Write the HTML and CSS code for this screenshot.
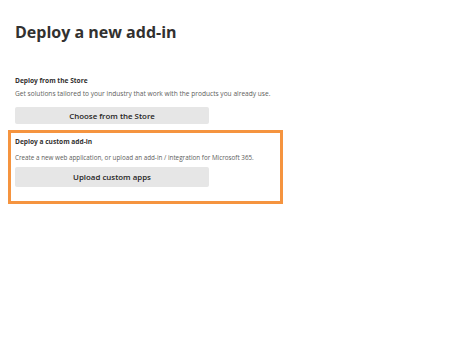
FILE: index.html
```html
<!DOCTYPE html>
<html lang="en">
<head>
    <meta charset="UTF-8">
    <meta name="viewport" content="width=device-width, initial-scale=1.0">
    <title>Deploy a new add-in</title>
    <link rel="stylesheet" href="styles.css">
</head>
<body>
    <div class="page">
        <h1>Deploy a new add-in</h1>

        <div class="section store">
            <h2>Deploy from the Store</h2>
            <p>Get solutions tailored to your industry that work with the products you already use.</p>
            <button class="action">Choose from the Store</button>
        </div>

        <div class="section highlight">
            <h2>Deploy a custom add-in</h2>
            <p>Create a new web application, or upload an add-in / integration for Microsoft 365.</p>
            <button class="action">Upload custom apps</button>
        </div>
    </div>
</body>
</html>
```

FILE: styles.css
```css
body {
    margin: 0;
    font-family: "Open Sans", Arial, sans-serif;
    color: #323130;
    background: #fff;
}

.page {
    padding: 20px 0 0 8px;
    width: 275px;
}

.page h1 {
    font-size: 16px;
    font-weight: 700;
    margin: 0 0 32px 7px;
    line-height: 24px;
}

.section {
    padding: 0 7px;
}

.section h2 {
    font-size: 6.6px;
    font-weight: 700;
    margin: 0;
    line-height: 10px;
}

.section p {
    font-size: 6.6px;
    color: #605e5c;
    margin: 3px 0 8px;
    line-height: 10px;
    white-space: nowrap;
}

.action {
    display: block;
    width: 194px;
    height: 17px;
    border: none;
    border-radius: 2px;
    background: #e6e6e6;
    font-family: "Open Sans", Arial, sans-serif;
    font-size: 7.9px;
    font-weight: 600;
    color: #252423;
    padding: 0;
}

.highlight {
    margin-top: 6px;
    border: 3px solid #f5943f;
    padding: 4px 4px 14px;
}

.highlight p {
    font-size: 6.3px;
    margin: 6px 0 4px;
}

.highlight .action {
    height: 20px;
}
```
